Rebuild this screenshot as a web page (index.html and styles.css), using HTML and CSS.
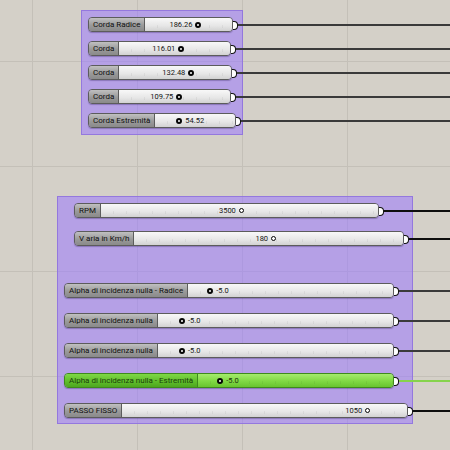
FILE: index.html
```html
<!DOCTYPE html>
<html>
<head>
<meta charset="utf-8">
<link rel="stylesheet" href="styles.css">
</head>
<body>
<div class="canvas">
  <div class="group group-top">
    <div class="slider w144">
      <span class="label">Corda Radice</span>
      <span class="track"><span class="val" style="margin-left:24px">186.26<i class="dot"></i></span></span>
    </div>
    <div class="slider w142">
      <span class="label">Corda</span>
      <span class="track"><span class="val" style="margin-left:33px">116.01<i class="dot"></i></span></span>
    </div>
    <div class="slider w143">
      <span class="label">Corda</span>
      <span class="track"><span class="val" style="margin-left:43px">132.48<i class="dot"></i></span></span>
    </div>
    <div class="slider w142">
      <span class="label">Corda</span>
      <span class="track"><span class="val" style="margin-left:31px">109.75<i class="dot"></i></span></span>
    </div>
    <div class="slider w147">
      <span class="label">Corda Estremità</span>
      <span class="track"><span class="val" style="margin-left:21px"><i class="dot"></i>54.52</span></span>
    </div>
  </div>

  <div class="group group-bottom">
    <div class="slider indent w304 thick row-first">
      <span class="label">RPM</span>
      <span class="track"><span class="val" style="margin-left:118px">3500<i class="dot thin"></i></span></span>
    </div>
    <div class="slider indent w329 thick row-second">
      <span class="label">V aria in Km/h</span>
      <span class="track"><span class="val" style="margin-left:121px">180<i class="dot thin"></i></span></span>
    </div>
    <div class="slider w329 row-third">
      <span class="label">Alpha di incidenza nulla - Radice</span>
      <span class="track"><span class="val" style="margin-left:19px"><i class="dot"></i>-5.0</span></span>
    </div>
    <div class="slider w329 row-next">
      <span class="label">Alpha di incidenza nulla</span>
      <span class="track"><span class="val" style="margin-left:21px"><i class="dot"></i>-5.0</span></span>
    </div>
    <div class="slider w329 row-next">
      <span class="label">Alpha di incidenza nulla</span>
      <span class="track"><span class="val" style="margin-left:21px"><i class="dot"></i>-5.0</span></span>
    </div>
    <div class="slider w329 green row-next">
      <span class="label">Alpha di incidenza nulla - Estremità</span>
      <span class="track"><span class="val" style="margin-left:19px"><i class="dot"></i>-5.0</span></span>
    </div>
    <div class="slider w343 thick row-next">
      <span class="label">PASSO FISSO</span>
      <span class="track"><span class="val" style="margin-left:223px">1050<i class="dot thin"></i></span></span>
    </div>
  </div>
</div>
</body>
</html>
```
FILE: styles.css
```css
* { box-sizing: border-box; }

html, body {
  margin: 0;
  padding: 0;
}

body {
  width: 450px;
  height: 450px;
  overflow: hidden;
  background-color: #d4d0c8;
  font-family: Roboto, "Liberation Sans", sans-serif;
}

.canvas {
  width: 450px;
  height: 450px;
  overflow: hidden;
  display: flex;
  flex-direction: column;
  align-items: flex-start;
  padding-top: 10px;
  background-image:
    linear-gradient(to right, #c4c0b8 1px, transparent 1px),
    linear-gradient(to bottom, #c4c0b8 1px, transparent 1px);
  background-size: 105px 105px;
  background-position: 32px 61px;
}

.group {
  background: rgba(155, 120, 255, 0.55);
  border: 1px solid rgba(140, 110, 220, 0.8);
  display: flex;
  flex-direction: column;
  flex: none;
}

.group-top {
  margin-left: 81px;
  width: 162px;
  padding: 6px 0 6px 6px;
  gap: 9px;
}

.group-bottom {
  margin-left: 57px;
  margin-top: 61px;
  width: 356px;
  height: 228px;
  padding: 6px 0 0 6px;
}

.slider {
  position: relative;
  display: flex;
  height: 15px;
  border: 1px solid #5c5c5c;
  border-radius: 4px;
  box-shadow: 0 1px 1px rgba(60, 40, 100, 0.35);
  flex: none;
}

.slider::before {
  content: "";
  position: absolute;
  left: calc(100% + 1px);
  top: 50%;
  margin-top: -4px;
  width: 4px;
  height: 7px;
  background: #fff;
  border: 1.5px solid #111;
  border-left: 0;
  border-radius: 0 4px 4px 0;
  z-index: 2;
}

.slider::after {
  content: "";
  position: absolute;
  left: calc(100% + 4px);
  top: 50%;
  margin-top: -1px;
  width: 420px;
  height: 2px;
  background: #3a3a3a;
  z-index: 1;
}

.slider.thick::after {
  background: #0e0e0e;
  height: 2.5px;
}

.slider.green::after {
  background: #86d34c;
}

.label {
  display: block;
  padding: 0 4px;
  font-size: 8px;
  line-height: 13px;
  color: #101010;
  white-space: nowrap;
  background: linear-gradient(#c0c0c0, #9a9a9a 55%, #8a8a8a);
  border-right: 1px solid #5c5c5c;
  border-radius: 3px 0 0 3px;
}

.track {
  flex: 1;
  display: flex;
  align-items: center;
  font-size: 7.5px;
  color: #141414;
  border-radius: 0 3px 3px 0;
  background-color: #e4e4e4;
  background-image:
    repeating-linear-gradient(to right, transparent 0 12px, rgba(0,0,0,0.05) 12px 13px),
    linear-gradient(#f8f8f8, #e6e6e6 60%, #d2d2d2);
  background-size: 100% 3px, 100% 100%;
  background-position: 0 7px, 0 0;
  background-repeat: no-repeat;
}

.val {
  display: inline-flex;
  align-items: center;
  gap: 3px;
  white-space: nowrap;
}

.dot {
  display: block;
  width: 6px;
  height: 6px;
  border: 2px solid #050505;
  border-radius: 50%;
  background: #fff;
}

.dot.thin {
  width: 5px;
  height: 5px;
  border-width: 1.5px;
}

.green {
  border-color: #3e8a1c;
}

.green .label {
  background: linear-gradient(#7fd846, #5ebc2a 60%, #4ea620);
  color: #1a400a;
  border-right-color: #3e8a1c;
}

.green .track {
  color: #1a340a;
  background-color: #7cd640;
  background-image:
    repeating-linear-gradient(to right, transparent 0 12px, rgba(0,0,0,0.05) 12px 13px),
    linear-gradient(#a4ec6c, #80d844 55%, #68c430);
}

.indent { margin-left: 10px; }

.w142 { width: 143px; }
.w143 { width: 144px; }
.w144 { width: 145px; }
.w147 { width: 148px; }
.w304 { width: 305px; }
.w329 { width: 330px; }
.w343 { width: 344px; }

.row-first { margin-top: 0; }
.row-second { margin-top: 13px; }
.row-third { margin-top: 37px; }
.row-next { margin-top: 15px; }
```
